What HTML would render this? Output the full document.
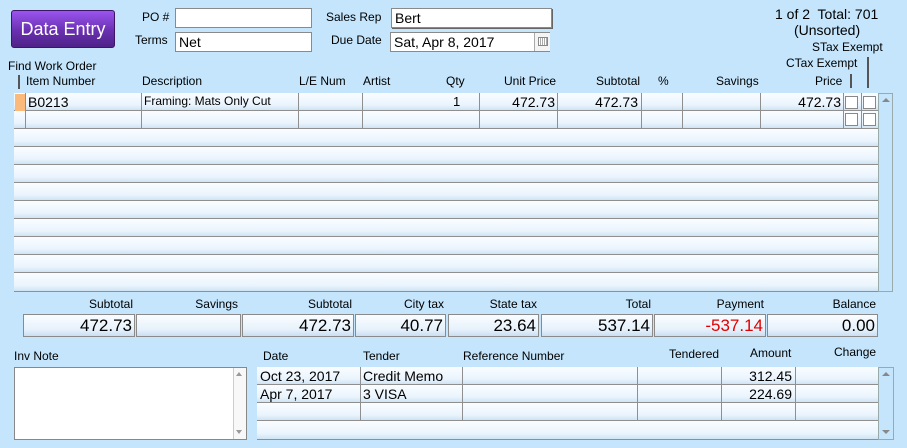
<!DOCTYPE html>
<html><head><meta charset="utf-8">
<style>
*{box-sizing:border-box;margin:0;padding:0}
body{width:907px;height:448px;background:#c4e5fc;font-family:"Liberation Sans",Arial,sans-serif;color:#000;position:relative;overflow:hidden}
.a{position:absolute;white-space:nowrap}
.lbl{font-size:12px}
.in{position:absolute;background:#fff;border:1px solid #8a8a8a;font-size:14px;padding-left:3px;line-height:18px}
.btn{position:absolute;left:11px;top:10px;width:104px;height:38px;border:1px solid #3d1466;border-radius:3px;background:linear-gradient(#9a55ef,#6a30b0 55%,#4e2388);color:#fff;font-size:18px;text-align:center;line-height:36px}
.row{position:absolute;left:14px;width:864px;height:18px;border-bottom:1px solid #8f8f8f;background:linear-gradient(#fafdff,#eaf4fd 70%,#cfe3f3)}
.vl{position:absolute;top:93px;width:1px;height:36px;background:#8f8f8f}
.c{font-size:13px;position:absolute}
.sb{position:absolute;background:#c4e5fc;border-left:1px solid #9aa}
.box{position:absolute;top:314px;height:23px;border:1px solid #8a8a8a;background:linear-gradient(#fafdff,#e6f1fb 70%,#c9dff2);font-size:17px;text-align:right;padding-right:2px;line-height:22px}
.sl{position:absolute;top:297px;font-size:12px;text-align:right}
.prow{position:absolute;left:257px;width:621px;height:18px;border-bottom:1px solid #8f8f8f;background:linear-gradient(#fafdff,#eaf4fd 70%,#cfe3f3)}
.pv{position:absolute;top:367px;width:1px;height:54px;background:#8f8f8f}
.bar{position:absolute;width:2px;background:#555}
</style></head><body>
<div class="btn">Data Entry</div>
<div class="a lbl" style="left:142px;top:10px">PO #</div>
<div class="in" style="left:175px;top:8px;width:137px;height:20px"></div>
<div class="a lbl" style="left:135px;top:33px">Terms</div>
<div class="in" style="left:175px;top:32px;width:137px;height:20px">Net</div>
<div class="a lbl" style="left:326px;top:10px">Sales Rep</div>
<div class="in" style="left:391px;top:8px;width:161px;height:20px;box-shadow:1px 1px 0 #666">Bert</div>
<div class="a lbl" style="left:331px;top:33px">Due Date</div>
<div class="in" style="left:390px;top:32px;width:160px;height:20px">Sat, Apr 8, 2017</div>
<div class="a" style="left:534px;top:33px;width:16px;height:18px;border-left:1px solid #aaa;background:#f4f4f4"><div style="margin:4px 3px;width:10px;height:9px;border:1px solid #888;background:repeating-linear-gradient(90deg,#fff 0 1px,#aaa 1px 2px)"></div></div>
<div class="a" style="left:775px;top:6px;font-size:14px">1 of 2&nbsp; Total: 701</div>
<div class="a" style="left:794px;top:22px;font-size:14px">(Unsorted)</div>
<div class="a lbl" style="left:812px;top:40px">STax Exempt</div>
<div class="a lbl" style="left:786px;top:56px">CTax Exempt</div>
<div class="bar" style="left:867px;top:57px;height:31px"></div>
<div class="bar" style="left:850px;top:74px;height:14px"></div>
<div class="a lbl" style="left:8px;top:59px">Find Work Order</div>
<div class="bar" style="left:18px;top:75px;height:14px"></div>
<div class="a lbl" style="left:26px;top:74px">Item Number</div>
<div class="a lbl" style="left:142px;top:74px">Description</div>
<div class="a lbl" style="left:299px;top:74px">L/E Num</div>
<div class="a lbl" style="left:363px;top:74px">Artist</div>
<div class="a lbl" style="left:446px;top:74px">Qty</div>
<div class="a lbl" style="left:504px;top:74px">Unit Price</div>
<div class="a lbl" style="left:596px;top:74px">Subtotal</div>
<div class="a lbl" style="left:658px;top:74px">%</div>
<div class="a lbl" style="left:716px;top:74px">Savings</div>
<div class="a lbl" style="left:815px;top:74px">Price</div>
<div class="a" style="left:14px;top:93px;width:865px;height:199px;border:1px solid #8f8f8f;background:#f6fbff"></div>
<div class="row" style="top:93px"></div><div class="row" style="top:111px"></div><div class="row" style="top:129px"></div><div class="row" style="top:147px"></div><div class="row" style="top:165px"></div><div class="row" style="top:183px"></div><div class="row" style="top:201px"></div><div class="row" style="top:219px"></div><div class="row" style="top:237px"></div><div class="row" style="top:255px"></div><div class="row" style="top:273px;height:19px"></div>
<div class="a" style="left:15px;top:94px;width:10px;height:17px;background:#fbb97a"></div>
<div class="vl" style="left:25px"></div><div class="vl" style="left:141px"></div><div class="vl" style="left:298px"></div><div class="vl" style="left:362px"></div><div class="vl" style="left:479px"></div><div class="vl" style="left:557px"></div><div class="vl" style="left:641px"></div><div class="vl" style="left:682px"></div><div class="vl" style="left:760px"></div><div class="vl" style="left:843px"></div><div class="vl" style="left:861px"></div>
<div class="a" style="left:845px;top:96px;width:13px;height:13px;border:1px solid #888;background:#fff"></div>
<div class="a" style="left:863px;top:96px;width:13px;height:13px;border:1px solid #888;background:#fff"></div>
<div class="a" style="left:845px;top:113px;width:13px;height:13px;border:1px solid #888;background:#fff"></div>
<div class="a" style="left:863px;top:113px;width:13px;height:13px;border:1px solid #888;background:#fff"></div>
<div class="c" style="left:28px;top:94px;font-size:14px">B0213</div>
<div class="a" style="left:144px;top:94px;font-size:12px;height:16px;overflow:hidden;line-height:14px">Framing: Mats Only Cut</div>
<div class="c" style="left:453px;top:94px">1</div>
<div class="c" style="left:479px;width:76px;text-align:right;top:94px;font-size:14px">472.73</div>
<div class="c" style="left:557px;width:81px;text-align:right;top:94px;font-size:14px">472.73</div>
<div class="c" style="left:760px;width:81px;text-align:right;top:94px;font-size:14px">472.73</div>
<div class="sb" style="left:878px;top:93px;width:15px;height:199px;border:1px solid #9aa"><div style="margin:4px auto;width:0;height:0;border:4px solid transparent;border-bottom:4px solid #888;border-top:0"></div></div>

<div class="sl" style="left:60px;width:73px">Subtotal</div>
<div class="sl" style="left:160px;width:78px">Savings</div>
<div class="sl" style="left:270px;width:82px">Subtotal</div>
<div class="sl" style="left:370px;width:74px">City tax</div>
<div class="sl" style="left:460px;width:77px">State tax</div>
<div class="sl" style="left:580px;width:71px">Total</div>
<div class="sl" style="left:680px;width:84px">Payment</div>
<div class="sl" style="left:800px;width:76px">Balance</div>
<div class="box" style="left:23px;width:112px">472.73</div>
<div class="box" style="left:136px;width:105px"></div>
<div class="box" style="left:242px;width:112px">472.73</div>
<div class="box" style="left:355px;width:91px">40.77</div>
<div class="box" style="left:448px;width:91px">23.64</div>
<div class="box" style="left:541px;width:112px">537.14</div>
<div class="box" style="left:654px;width:112px;color:#e00000">-537.14</div>
<div class="box" style="left:767px;width:111px">0.00</div>

<div class="a lbl" style="left:14px;top:349px">Inv Note</div>
<div class="a" style="left:14px;top:367px;width:233px;height:73px;border:1px solid #888;background:#fff"></div>
<div class="a" style="left:233px;top:368px;width:13px;height:71px;border-left:1px solid #ccc;background:#f8f8f8"></div>
<div class="a" style="left:236px;top:372px;border:3px solid transparent;border-bottom:4px solid #999;border-top:0"></div>
<div class="a" style="left:236px;top:430px;border:3px solid transparent;border-top:4px solid #999;border-bottom:0"></div>
<div class="a lbl" style="left:263px;top:349px">Date</div>
<div class="a lbl" style="left:363px;top:349px">Tender</div>
<div class="a lbl" style="left:463px;top:349px">Reference Number</div>
<div class="a lbl" style="left:669px;top:347px">Tendered</div>
<div class="a lbl" style="left:750px;top:346px">Amount</div>
<div class="a lbl" style="left:834px;top:345px">Change</div>
<div class="a" style="left:257px;top:367px;width:637px;height:73px;border:1px solid #8f8f8f;background:#f6fbff"></div>
<div class="prow" style="top:367px"></div><div class="prow" style="top:385px"></div><div class="prow" style="top:403px"></div><div class="prow" style="top:421px;height:19px"></div>
<div class="pv" style="left:360px"></div><div class="pv" style="left:462px"></div><div class="pv" style="left:637px"></div><div class="pv" style="left:721px"></div><div class="pv" style="left:795px"></div>
<div class="c" style="left:260px;top:368px;font-size:14px">Oct 23, 2017</div>
<div class="c" style="left:363px;top:368px;font-size:14px">Credit Memo</div>
<div class="c" style="left:260px;top:386px;font-size:14px">Apr 7, 2017</div>
<div class="c" style="left:363px;top:386px;font-size:14px">3 VISA</div>
<div class="c" style="left:721px;width:71px;text-align:right;top:368px;font-size:14px">312.45</div>
<div class="c" style="left:721px;width:71px;text-align:right;top:386px;font-size:14px">224.69</div>
<div class="sb" style="left:878px;top:367px;width:16px;height:73px;border:1px solid #9aa"></div>
<div class="a" style="left:882px;top:372px;border:4px solid transparent;border-bottom:4px solid #888;border-top:0"></div>
<div class="a" style="left:882px;top:430px;border:4px solid transparent;border-top:4px solid #888;border-bottom:0"></div>
</body></html>
